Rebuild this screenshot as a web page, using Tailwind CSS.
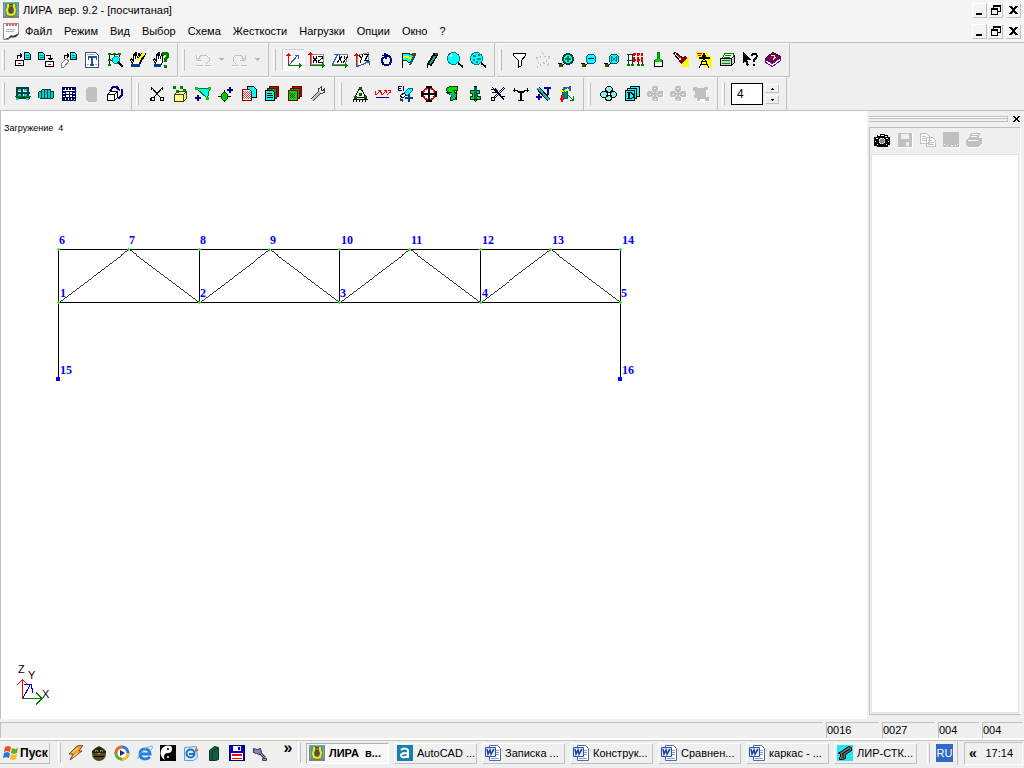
<!DOCTYPE html>
<html lang="ru">
<head>
    <meta charset="UTF-8">
    <meta name="viewport" content="width=device-width, initial-scale=1.0">
    <title>ЛИРА вер. 9.2 - [посчитаная]</title>
    <script src="https://cdn.jsdelivr.net/npm/@tailwindcss/browser@4"></script>
</head>
<body class="flex h-screen flex-col overflow-hidden bg-[#efefef] font-['Liberation_Sans',Arial,sans-serif] text-[11px] text-black">

    <!-- shared icons -->
    <svg class="hidden" xmlns="http://www.w3.org/2000/svg">
        <symbol id="lyre" viewBox="0 0 16 16">
            <path fill="#808080" d="M0 0h16v16H0z"/>
            <path fill="none" stroke="#40c8c8" d="M1 .5h14M1.5 1v13M14.500 1v13"/>
            <path fill="#505050" stroke="#e8f000" stroke-width="2" d="M5 2v3l-1 3 1 4 3 1 3-1 1-4-1-3V2"/>
            <path fill="#808000" d="M6 3h4v2H6zM5 14h6v1H5z"/>
        </symbol>
        <symbol id="minimize" viewBox="0 0 13 13"><path fill="#000" d="M3 9h6v2H3z"/></symbol>
        <symbol id="restore" viewBox="0 0 13 13">
            <path fill="#000" d="M4 1h8v7H9V7h2V3H5v1H4zM2 4h7v7H2zM3 6v4h5V6z" fill-rule="evenodd"/>
        </symbol>
        <symbol id="close" viewBox="0 0 13 13">
            <path fill="#000" d="M2 2h3v1h1v1h1V3h1V2h3v1h-1v1H9v1H8v2h1v1h1v1h1v1H8V9H7V8H6v1H5v1H2V9h1V8h1V7h1V5H4V4H3V3H2z"/>
        </symbol>
        <symbol id="word" viewBox="0 0 16 16">
            <path fill="#fff" stroke="#4a6aa8" d="M4.500.5h8l3 3v12h-11z"/>
            <path stroke="#7f9fd8" d="M11 5.500h3M11 7.500h3M11 9.500h3M6 13.500h8"/>
            <path fill="#e4ecfa" stroke="#2a52a8" d="M.5 2.500h10v9H.5z"/>
            <path fill="none" stroke="#1c4098" stroke-width="1.500" d="M2 4l1 5 2-4 1 4 3-5"/>
        </symbol>
        <symbol id="sheets" viewBox="0 0 18 18">
            <path fill="#c00000" stroke="#700000" d="M6.500 1.500h9v10h-9z"/>
            <path fill="#00a000" stroke="#700000" d="M4.500 3.500h9v10h-9z"/>
        </symbol>
        <symbol id="cross" viewBox="0 0 18 18">
            <path fill="#fff" stroke="none" d="M8 2h5v5h5v6h-5v4H7v-4H2V8h6z"/>
            <path fill="#c0c0c0" stroke="none" d="M7 1h4l1 1v4h4l1 1v4l-1 1h-4v3l-1 1H7l-1-1v-3H2l-1-1V7l1-1h4V2z"/>
            <path fill="none" stroke="#efefef" d="M6 6l2 2M12 6l-2 2M6 12l2-2M12 12l-2-2M8 3.500h2M8 14.500h2M3 9.500h2M13 9.500h2"/>
        </symbol>
    </svg>

    <header class="bg-[#f4f4f4]">
        <div class="flex h-[21px] items-center px-[3px] pb-px">
            <svg class="mr-1 size-[16px]"><use href="#lyre"/></svg>
            <h1 class="whitespace-pre">ЛИРА  вер. 9.2 - [посчитаная]</h1>
            <div class="ml-auto flex [shape-rendering:crispEdges] [&>button]:flex [&>button]:size-[15px] [&>button]:items-center [&>button]:justify-center [&>button]:border [&>button]:border-t-white [&>button]:border-r-[#c0c0c0] [&>button]:border-b-[#c0c0c0] [&>button]:border-l-white [&_svg]:size-[13px]">
                <button aria-label="Свернуть"><svg><use href="#minimize"/></svg></button>
                <button aria-label="Восстановить" class="ml-px"><svg><use href="#restore"/></svg></button>
                <button aria-label="Закрыть" class="ml-[3px]"><svg><use href="#close"/></svg></button>
            </div>
        </div>
        <div class="flex h-[22px] items-center border-b border-[#c0c0c0] px-[3px] pb-px">
            <svg class="mr-[5px] h-[18px] w-[17px]" viewBox="0 0 17 18">
                <path fill="#fff" stroke="#909090" d="M.5 1.500h15v11l-4 3H8l-3 2H.5z"/>
                <path stroke="#ff5050" stroke-width="2" stroke-dasharray="2 1" d="M3 3h11"/>
                <path fill="none" stroke="#b0b0b0" d="M3 7.500h9M3 9.500h8"/>
                <path fill="#303030" d="M1 17l4-1 3-3 2 1 6-3-3 4H8l-3 2z"/>
            </svg>
            <nav class="flex gap-3">
                <a href="#">Файл</a>
                <a href="#">Режим</a>
                <a href="#">Вид</a>
                <a href="#">Выбор</a>
                <a href="#">Схема</a>
                <a href="#">Жесткости</a>
                <a href="#">Нагрузки</a>
                <a href="#">Опции</a>
                <a href="#">Окно</a>
                <a href="#">?</a>
            </nav>
            <div class="ml-auto flex [shape-rendering:crispEdges] [&>button]:flex [&>button]:size-[15px] [&>button]:items-center [&>button]:justify-center [&>button]:border [&>button]:border-t-white [&>button]:border-r-[#c0c0c0] [&>button]:border-b-[#c0c0c0] [&>button]:border-l-white [&_svg]:size-[13px]">
                <button aria-label="Свернуть окно"><svg><use href="#minimize"/></svg></button>
                <button aria-label="Восстановить окно" class="ml-px"><svg><use href="#restore"/></svg></button>
                <button aria-label="Закрыть окно" class="ml-[3px]"><svg><use href="#close"/></svg></button>
            </div>
        </div>
    </header>

    <!-- toolbars -->
    <div class="border-b border-[#c0c0c0] [shape-rendering:crispEdges] [&_button]:flex [&_button]:shrink-0 [&_button]:items-center [&_button]:justify-center [&_i]:mr-[6px] [&_i]:h-[22px] [&_i]:w-[3px] [&_i]:border-r [&_i]:border-l [&_i]:border-r-[#c0c0c0] [&_i]:border-l-white [&_svg]:size-[18px] [&_svg]:fill-none [&_svg]:stroke-black">
        <div class="flex gap-[2px] [&>div]:flex [&>div]:h-[34px] [&>div]:items-center [&>div]:border-t [&>div]:border-r [&>div]:border-b [&>div]:border-t-white [&>div]:border-r-[#c0c0c0] [&>div]:border-b-[#c0c0c0] [&>div]:pr-[5px] [&>div]:pl-[2px] [&>div>button]:h-[22px] [&>div>button]:w-[23px]">
            <div>
                <i></i>
                <button aria-label="Открыть"><svg viewBox="0 0 18 18"><path fill="#fff" d="M1.500 9.500h8v5h-8z"/><path stroke="#f00" d="M4 12.500h3"/><path d="M3.500 8V4.500H8M6.500 2v5M7.500 3v3"/><path fill="#0ff" stroke="#000" d="M10.500 1.500h4l2 2v5h-6z"/><path stroke="#008080" d="M12 4.500h3M12 6.500h4"/></svg></button>
                <button aria-label="Сохранить"><svg viewBox="0 0 18 18"><path fill="#fff" d="M8.500 10.500h8v5h-8z"/><path stroke="#f00" d="M11 13.500h3"/><path d="M9 4.500h4.500V9M11 7.500h5M12 8.500h3"/><path fill="#0ff" stroke="#000" d="M1.500 1.500h4l2 2v5h-6z"/><path stroke="#008080" d="M3 4.500h3M3 6.500h4"/></svg></button>
                <button aria-label="Импорт"><svg viewBox="0 0 18 18"><path d="M4.500 8V4.500H9M7.500 2v5M8.500 3v3"/><path fill="#0ff" stroke="#000" d="M10.500 1.500h4l2 2v5h-6z"/><path stroke="#008080" d="M12 4.500h3M12 6.500h4"/><path fill="#fff" stroke="#808080" d="M6 8l3 2-5 6H1v-3z"/></svg></button>
                <button aria-label="Текст"><svg viewBox="0 0 18 18"><path fill="#fff" stroke="#405070" d="M2.500 1.500h10l3 3v12h-13z"/><path stroke="#a0b0c0" d="M4 3.500h8M4 13.500h2M12 13.500h2"/><path stroke="#2050a0" stroke-width="2" d="M5 6h9M9 6v7M7 14h4"/><path stroke="#2050a0" d="M5.500 6v3M13.500 6v3"/></svg></button>
                <button aria-label="Найти"><svg viewBox="0 0 18 18"><path d="M2 3.500h12M2 9.500h8M3.500 3v11M8.500 3v5M13.500 3v3"/><path stroke="#008000" stroke-width="2" d="M2 3h3M7 3h3M12 3h3M2 9h3M2 14h3"/><circle cx="10" cy="9" r="3.500" fill="#0ff" stroke="#008080"/><path stroke-width="2" d="M12 11l5 5"/></svg></button>
                <button aria-label="Править"><svg viewBox="0 0 18 18"><path fill="#fff" d="M4.500 14l-3-5 1-1 2 2V3.500l1-1 1 5V2l1-.5 1 6 1-5h1v5l2-2 1 1-3 5v3z"/><path stroke="#ff0" stroke-width="3" d="M9 9l6-7"/><path d="M17 2l-6 11M13 2l-4 5"/><path fill="#004080" stroke="#004080" d="M2.500 13.500h8v2h-8z"/></svg></button>
                <button aria-label="Вопрос"><svg viewBox="0 0 18 18"><path fill="#fff" d="M4.500 14l-3-5 1-1 2 2V3.500l1-1 1 5V2l1-.5 1 6 1-5h1v9l-2 3z"/><path stroke="#008000" stroke-width="3" d="M10 4l2-2h3l1 2-1 3-2 1v3M12 15h3"/><path fill="#004080" stroke="#004080" d="M2.500 13.500h6v2h-6z"/></svg></button>
            </div>
            <div>
                <i></i>
                <button aria-label="Отменить" disabled><svg viewBox="0 0 18 18"><path stroke="#fff" d="M4 6l4-2h5l3 4-2 5M2 15.500h16M3 3v7h6"/><path stroke="#c0c0c0" d="M4 8.500L7 4h5l3 3v3l-3 3M2.500 4v5M3 9.500h5M2 7.500h4M2 14.500h7M11 14.500h6"/></svg></button>
                <button aria-label="Список отмен" disabled class="!w-[13px]"><svg class="!h-[4px] !w-[7px]" viewBox="0 0 7 4"><path fill="#b8b8b8" stroke="none" d="M1 0h6L4 3z"/></svg></button>
                <button aria-label="Вернуть" disabled><svg viewBox="0 0 18 18"><path stroke="#fff" d="M14 6l-4-2H6L3 8l2 5M2 15.500h16"/><path stroke="#c0c0c0" d="M14 8.500L11 4H6L3 7v3l3 3M15.500 4v5M10 9.500h5M12 7.500h4M2 14.500h7M11 14.500h6"/></svg></button>
                <button aria-label="Список возвратов" disabled class="!w-[13px]"><svg class="!h-[4px] !w-[7px]" viewBox="0 0 7 4"><path fill="#b8b8b8" stroke="none" d="M1 0h6L4 3z"/></svg></button>
            </div>
            <div>
                <i></i>
                <button aria-label="Изометрия" class="border border-t-[#d0d0d0] border-r-white border-b-white border-l-[#d0d0d0] bg-[#f8f8f8]"><svg viewBox="0 0 18 18"><path stroke="#f00" d="M3.500 14V2M1 4.500h5M2 3.500h3"/><path stroke="#2060c0" d="M4 14l9-10M10 4.500h4M13.500 4v4"/><path stroke="#008000" d="M3 14.500h14M14.500 12v5M15.500 13v3"/></svg></button>
                <button aria-label="XZ"><svg viewBox="0 0 18 18"><path fill="#fff" stroke="#909090" d="M3.500 3.500h12v10h-12z"/><path stroke="#f00" d="M2.500 14V1M0 3.500h5M1 2.500h3"/><path stroke="#008000" d="M2 14.500h15M14.500 12v5M15.500 13v3"/><path d="M5.500 5v2l3 3v2M8.500 5v2l-3 3v2M10 5.500h4v2L10.500 10v1.500h4"/></svg></button>
                <button aria-label="XY"><svg viewBox="0 0 18 18"><path fill="#fff" stroke="#808080" d="M6.500 3.500h10l-2 10h-13z"/><path stroke="#2060c0" d="M1 14l6-11M3 3.500h5v3"/><path stroke="#008000" d="M1 14.500h16M14.500 12v5M15.500 13v3"/><path d="M8 5v2l2 3v2M11 5l-5 7M13 5l1 3M17 5l-5 7"/></svg></button>
                <button aria-label="YZ"><svg viewBox="0 0 18 18"><path fill="#fff" stroke="#909090" d="M3.500 4.500l11-3v9l-11 5z"/><path stroke="#f00" d="M2.500 16V2M0 4.500h5M1 3.500h3"/><path stroke="#2060c0" d="M2 16l13-5M12 10h3v4"/><path d="M5 4l2 3M9 3l-3 9M10 3.500h4l-3 6h4"/></svg></button>
                <button aria-label="Повернуть"><svg viewBox="0 0 18 18"><path fill="#000080" stroke="none" d="M7 2h2v1h2v1h2v1h1v2h1v5h-1v2h-2v1H7v-1H5v-2H4V7h1V6h2v2H6v3h1v2h5v-2h1V7h-1V6h-2v2H8V7H7V5H5V4h2z"/></svg></button>
                <button aria-label="Флаги рисования"><svg viewBox="0 0 18 18"><path fill="#0ff" stroke="#004000" d="M2.500 2.500h6l2 1h5l-4 8H9l-3-2H2.500z"/><path stroke="#ff0" stroke-width="2" d="M3 6h5l3 2"/><path d="M2.500 2v15"/><path stroke="#006060" stroke-width="2" d="M15 3l-5 11"/><path fill="#604000" stroke="#604000" d="M12.500 2.500h3v2h-3z"/></svg></button>
                <button aria-label="Карандаш"><svg viewBox="0 0 18 18"><path stroke-width="5" d="M13 3L6 14"/><path stroke="#00a0a0" stroke-width="2" d="M12 5l-5 8"/><path stroke="#604000" stroke-width="2" d="M12 3h3"/><path d="M4.500 13v4"/></svg></button>
                <button aria-label="Лупа"><svg viewBox="0 0 18 18"><circle cx="7.500" cy="7.500" r="6" fill="#0ff" stroke="#008080"/><path stroke="#fff" stroke-width="2" d="M4 6l2-2"/><path stroke-width="2" d="M12 12l5 4"/></svg></button>
                <button aria-label="Показать все"><svg viewBox="0 0 18 18"><circle cx="7.500" cy="7.500" r="6" fill="#0ff" stroke="#008080"/><path stroke="#008080" stroke-width="2" d="M4 5h3M8 8h4M4 9h2M9 4h2M7 11h2"/><path stroke-width="2" d="M12 12l5 4"/></svg></button>
            </div>
            <div>
                <i></i>
                <button aria-label="Фильтр"><svg viewBox="0 0 18 18"><path fill="#fff" d="M2.500 2.500h12v2l-4 5v5l-3 2v-7l-5-5z"/></svg></button>
                <button aria-label="Полифильтр" disabled><svg viewBox="0 0 18 18"><path stroke="#c0c0c0" stroke-dasharray="2 2" d="M8.500 2l2 4 6-1-4 5 3 5-6-3-6 4 1-6-3-4h5z"/></svg></button>
                <button aria-label="Увеличить"><svg viewBox="0 0 18 18"><circle cx="11" cy="8" r="5" fill="#0ff" stroke="#004040" stroke-width="2"/><path stroke="#008000" stroke-width="2" d="M8 8h6M11 5v6"/><path stroke="#604000" stroke-width="3" d="M2 14.500h4"/><path d="M1 12.500h4M5 15l3-3"/></svg></button>
                <button aria-label="Уменьшить"><svg viewBox="0 0 18 18"><circle cx="11" cy="8" r="5" fill="#0ff" stroke="#006080"/><path stroke="#0000a0" d="M8 7.500h6"/><path stroke="#604000" stroke-width="3" d="M2 14.500h4"/><path d="M1 12.500h4M5 15l3-3"/></svg></button>
                <button aria-label="Исходный размер"><svg viewBox="0 0 18 18"><circle cx="11" cy="8" r="5" fill="#0ff" stroke="#006060"/><path stroke="#006080" d="M8 5l6 6M14 5l-6 6M8.500 5v6M13.500 5v6"/><path stroke="#604000" stroke-width="3" d="M2 14.500h4"/><path d="M1 12.500h4M5 15l3-3"/></svg></button>
                <button aria-label="Узлы"><svg viewBox="0 0 18 18"><path stroke="#004040" d="M1 3.500h8M1 9.500h8M2.500 3v12M6.500 3v12"/><path stroke="#e00000" stroke-width="2" stroke-dasharray="3 1" d="M7 3h10M7 9h10M8 2v9M12 2v9M16 2v9"/><path d="M12.500 11v4M16.500 11v4"/><path stroke="#008000" stroke-width="2" d="M1 14h3M5 14h3M11 14h3M15 14h3"/></svg></button>
                <button aria-label="Кисть"><svg viewBox="0 0 18 18"><path fill="#0c0" stroke="#008000" d="M8.500 1.500h2v7h-2z"/><path fill="#fff" d="M5.500 9.500h8v6h-8z"/><path fill="#0c0" stroke="none" d="M6 8h7v3H6z"/></svg></button>
                <button aria-label="Фонарь"><svg viewBox="0 0 18 18"><path fill="#ff0" stroke="none" d="M11 11l6-6v11H9z"/><path fill="#fff" d="M1.500 2.500l2-1 8 6-2 4z"/><path stroke="#800000" stroke-width="3" d="M8 12l6-6"/><path stroke="#f00" d="M4 3l6 5"/></svg></button>
                <button aria-label="Отметки"><svg viewBox="0 0 18 18"><path fill="#ff0" stroke="none" d="M1 1h9l7 5v10H9L5 7H1z"/><path d="M8.500 2v6M9.500 2v6M9 7l-5 10M9 7l5 10M6 10.500h6M5 13.500h8"/><path stroke-width="2" d="M4 7h11M7 5h4"/><path stroke="#c00000" d="M2 2.500h5M3 4.500h3"/></svg></button>
                <button aria-label="Печать"><svg viewBox="0 0 18 18"><path fill="#fff" stroke="#008000" d="M6.500 2.500h9v5h-11z"/><path stroke="#008000" d="M7 4.500h6M6 6.500h6"/><path fill="#c0d8c8" d="M2.500 7.500h11v7h-11zM13.500 7.500l3-3v7l-3 3"/><path stroke="#008000" d="M4 9.500h8M4 12.500h8"/></svg></button>
                <button aria-label="Что это?"><svg viewBox="0 0 18 18"><path fill="#000" stroke="none" d="M2 1l8 8H6l2 5-2 1-2-5-2 2z"/><path stroke-width="2" d="M10 5l2-2h3l1 2-1 2-2 2v2M12 14h2"/></svg></button>
                <button aria-label="Справка"><svg viewBox="0 0 18 18"><path fill="#800080" stroke="#400040" d="M8.500 1.500l8 4-8 6-7-4z"/><path fill="#fff" stroke="#800080" d="M1.500 8.500l7 4 8-6v3l-8 6-7-4z"/><path stroke="#ff0" d="M7 4.500h3l1 2-2 2"/></svg></button>
            </div>
        </div>
        <div class="flex gap-[2px] [&>div]:flex [&>div]:h-[33px] [&>div]:items-center [&>div]:border-t [&>div]:border-r [&>div]:border-t-white [&>div]:border-r-[#c0c0c0] [&>div]:pr-[5px] [&>div]:pl-[2px] [&>div>button]:h-[22px] [&>div>button]:w-[23px]">
            <div>
                <i></i>
                <button aria-label="Рама"><svg viewBox="0 0 18 18"><path stroke="#004040" stroke-width="2" d="M2 3h12v9M3 3v10h13M8 3v9M2 8h14"/><path stroke="#0cc" stroke-width="2" d="M4 5h3M10 5h3M4 10h3M10 10h3M2 14h3M12 14h3"/><path stroke="#008000" d="M1 11.500h16"/></svg></button>
                <button aria-label="Ферма"><svg viewBox="0 0 18 18"><path fill="#0cc" stroke="none" d="M2 7l3-2 4-1 4 1 4 2v6H2z"/><path stroke="#004040" d="M2 6.500h3M5 4.500h9M14 6.500h3M4.500 5v9M7.500 4v10M10.500 4v10M13.500 5v9M1.500 7v6M16.500 7v6M3 13.500h13"/></svg></button>
                <button aria-label="Пластины"><svg viewBox="0 0 18 18"><path fill="#fff" stroke="#000040" d="M2.500 2.500h13v13h-13z"/><path stroke="#000080" stroke-width="2" stroke-dasharray="2 1" d="M3 4h12M3 14h12M4 3v12M14 3v12"/><path stroke="#000040" d="M5.500 6.500h7v6h-7zM9 6.500v6M5.500 9.500h7"/></svg></button>
                <button aria-label="Оболочка" disabled><svg viewBox="0 0 18 18"><path fill="#c0c0c0" stroke="none" d="M5 2h7l2 2v11l-2 2H5l-2-2V4z"/></svg></button>
                <button aria-label="Объемное тело"><svg viewBox="0 0 18 18"><path fill="#fff" d="M1.500 9.500l3-3h7v6l-3 3h-7zM2 9.500h6.500v6M8.500 9.500l3-3"/><path stroke="#000080" stroke-width="2" d="M4 6l3-4h4l2 2M16 4v6l-4 4M9 2l5 3"/></svg></button>
            </div>
            <div>
                <i></i>
                <button aria-label="Упаковка"><svg viewBox="0 0 18 18"><path d="M3 2l9 10M15 2L6 12M3.500 3v2M14.500 3v2"/><path d="M3 12.500h3v3H3zM12 12.500h3v3h-3zM2.500 13v3M15.500 13v3"/></svg></button>
                <button aria-label="Добавить узел"><svg viewBox="0 0 18 18"><path fill="#ff8" stroke="#404000" d="M3.500 9.500h9v7h-9zM12.500 9.500l3-3v7l-3 3M3.500 9.500l3-3h9"/><path stroke="#008000" stroke-width="3" d="M2 2.500h3M9 2.500h3M5 6.500h3M12 5.500h3"/></svg></button>
                <button aria-label="Добавить элемент"><svg viewBox="0 0 18 18"><path fill="#0ff" stroke="#008000" d="M2.500 3.500h13l-2 10z"/><path stroke="#0c0" stroke-width="3" d="M1 3.500h3M14 3.500h3M12 13.500h3"/><path stroke="#000080" stroke-width="2" d="M1 13h6M4 10v6"/></svg></button>
                <button aria-label="Новый узел"><svg viewBox="0 0 18 18"><path d="M1 11.500h13M7.500 5v12"/><path fill="#0c0" stroke="#006000" d="M6.500 7.500h2l2 2v4l-2 2h-2l-2-2v-4z"/><path stroke="#000080" stroke-width="2" d="M10 5h6M13 2v6"/></svg></button>
                <button aria-label="Копировать"><svg viewBox="0 0 18 18"><path fill="#0ff" d="M7.500 1.500h6l3 3v8h-9z"/><path fill="#fff" stroke="#800000" d="M2.500 4.500h7l2 2v9h-9z"/><path stroke="#e04040" stroke-dasharray="1 1" d="M3 6.500h7M4 7.500h7M3 8.500h8M4 9.500h7M3 10.500h8M4 11.500h7M3 12.500h8M4 13.500h7"/></svg></button>
                <button aria-label="Листы"><svg viewBox="0 0 18 18"><use href="#sheets"/><path fill="#0ff" d="M2.500 5.500h7l2 2v8h-9z"/><path d="M4 8.500h5M4 10.500h6M4 12.500h6"/></svg></button>
                <button aria-label="Сборка"><svg viewBox="0 0 18 18"><use href="#sheets"/><path fill="#0d0" stroke="#800000" d="M2.500 5.500h9v10h-9z"/><path stroke="#004000" stroke-dasharray="1 1" d="M4 8.500h6M5 9.500h4M4 10.500h6M5 11.500h4M4 12.500h6"/></svg></button>
                <button aria-label="Ключ"><svg viewBox="0 0 18 18"><path stroke="#404040" stroke-width="4" d="M3 15l8-8"/><path stroke="#c0c0c0" stroke-width="2" d="M3 15l8-8"/><path stroke="#404040" d="M9.500 7V4l3-2v3h2l1-1v3l-3 2"/></svg></button>
            </div>
            <div>
                <i></i>
                <button aria-label="Связи"><svg viewBox="0 0 18 18"><path d="M8 4L4 12M10 4l5 8M5 12.500h9"/><path stroke="#006000" stroke-width="3" d="M8 3.500h3M3 12.500h3M13 12.500h3M8 9.500h3"/><path d="M2 14.500h15"/><path stroke-width="2" stroke-dasharray="1 2" d="M2 16h15"/></svg></button>
                <button aria-label="Нагрузка"><svg viewBox="0 0 18 18"><path stroke="#f00" d="M1.500 10V6M2 10l4-4M4 5.500h2.500V8M7.500 10V7M8 10l4-4M10 5.500h2.500V8M13 10l4-4M14 5.500h2.500V8"/><path stroke="#000080" d="M2 12.500h13"/></svg></button>
                <button aria-label="Жесткости элементов"><svg viewBox="0 0 18 18"><path stroke="#000080" d="M1.500 1v5M1 1.500h4M1 3.500h3M1 5.500h4M6.500 1v5"/><path fill="#0ff" stroke="#006080" d="M7 8l5-5h3v3l-5 5z"/><path fill="#fff" d="M3 11l4-3 2 2-3 3z"/><path stroke="#004080" stroke-width="2" d="M8 13h8M12 9v8M3 14l3 2"/></svg></button>
                <button aria-label="Жесткие вставки"><svg viewBox="0 0 18 18"><circle cx="9" cy="9" r="6" fill="#fff" stroke="#e00000" stroke-width="2"/><path stroke-width="2" d="M1 9h16M9 2v14M2 6v6M16 6v6M6 2h6M6 16h6"/></svg></button>
                <button aria-label="Шарниры"><svg viewBox="0 0 18 18"><path fill="#0d0" stroke="#004000" d="M3.500 3.500l3-2h8v4h-4l3 4-1 5-5 1v-3l2-2-5-2z"/><path stroke="#0aa" stroke-width="2" d="M6 8l5 3-3 3"/><path d="M3 7.500h6M13.500 6v9"/></svg></button>
                <button aria-label="Местные оси"><svg viewBox="0 0 18 18"><path fill="#0d0" stroke="#004000" d="M4.500 5.500h9v3h-2v3h3v3h-3l-2 2-2-2h-3v-3h2v-3h-2z"/><path stroke="#006080" stroke-width="3" d="M9 1v13"/><path d="M8 1.500h3M7 14.500h5"/></svg></button>
                <button aria-label="Удалить"><svg viewBox="0 0 18 18"><path stroke="#000080" d="M2 4.500h5M6 3l9 12"/><path d="M15 2L4 13M16 3L5 14M3 2l9 10M2 12.500h3v3H2zM12 11.500h4M3 7.500h4"/></svg></button>
                <button aria-label="Тройник"><svg viewBox="0 0 18 18"><path d="M1 5.500h4l2 2h4l2-2h4M8.500 8v7M9.500 8v7M6 15.500h6M2.500 3v4M15.500 3v4M7 6.500h4"/></svg></button>
                <button aria-label="Температура"><svg viewBox="0 0 18 18"><path stroke-width="4" d="M3 3l11 12"/><path stroke="#0cc" stroke-width="2" d="M3 3l11 12"/><path stroke="#0000a0" stroke-width="2" d="M9 3h7M13 3v7M1 12h6M4 9v6"/></svg></button>
                <button aria-label="Перемещения"><svg viewBox="0 0 18 18"><path fill="#008080" stroke="#006060" d="M4.500 4.500h5v9h-5z"/><path stroke="#2060c0" stroke-width="2" d="M5 3h7M12 1v5"/><path stroke="#ff0" stroke-width="2" d="M2 6h5l3-2"/><path stroke="#008000" d="M5 5l10 10M15.500 11v4H12"/><path stroke="#f00" stroke-width="2" d="M4 10v7M2 14h4"/></svg></button>
            </div>
            <div>
                <i></i>
                <button aria-label="Сечения"><svg viewBox="0 0 18 18"><path fill="#8ee" d="M7.500 1.500h3l2 2v3h2l2 2v2l-2 2h-3v2l-2 1h-2l-2-1v-2h-3l-2-2v-2l2-2h3v-3z"/><path stroke-width="2" d="M6 6l6 6M12 6l-6 6"/><path fill="#fff" stroke="none" d="M8 8h2v2H8z"/></svg></button>
                <button aria-label="Документы"><svg viewBox="0 0 18 18"><path fill="#0ff" d="M7.500 1.500h9v10h-9z"/><path fill="#0ff" d="M4.500 3.500h9v10h-9z"/><path fill="#0ff" d="M2.500 5.500h9v10h-9z"/><path d="M4 7.500h4l2 2v3l-2 1H4M5.500 7v6M6.500 7v6"/></svg></button>
                <button aria-label="Сечение 1" disabled><svg><use href="#cross"/></svg></button>
                <button aria-label="Сечение 2" disabled><svg><use href="#cross"/></svg></button>
                <button aria-label="Сечение 3" disabled><svg viewBox="0 0 18 18"><path fill="#fff" stroke="none" d="M3 3h14v3h-2v8h3v3H4v-4H3z"/><path fill="#c0c0c0" stroke="none" d="M1 2h4v1h7V2h4v3h-2v7h3v4h-4v-2H8v2H5v-3H2v-3h1V6H1z"/></svg></button>
            </div>
            <div class="!pr-[7px]">
                <i></i>
                <input aria-label="Номер загружения" type="text" value="4" class="h-[22px] w-[32px] border border-black bg-white pl-[5px] text-[12px]">
                <div class="ml-[2px] flex flex-col gap-[2px] [&>button]:h-[9px] [&>button]:w-[14px] [&>button]:border [&>button]:border-t-white [&>button]:border-r-[#c0c0c0] [&>button]:border-b-[#c0c0c0] [&>button]:border-l-white [&_svg]:!h-[2px] [&_svg]:!w-[3px]">
                    <button aria-label="Больше"><svg viewBox="0 0 3 2"><path fill="#000" stroke="none" d="M1 0h1v1h1v1H0V1h1z"/></svg></button>
                    <button aria-label="Меньше"><svg viewBox="0 0 3 2"><path fill="#000" stroke="none" d="M0 0h3v1H2v1H1V1H0z"/></svg></button>
                </div>
            </div>
        </div>
    </div>

    <div class="flex min-h-0 flex-1">
        <!-- design scheme, drawn from the top left corner of the view -->
        <main class="relative min-w-0 flex-1 overflow-hidden border-l border-[#c0c0c0] bg-white">
            <p class="pt-[11px] pl-[3px] text-[9px] leading-[12px] whitespace-pre">Загружение  4</p>
            <svg class="absolute top-0 left-0 h-[300px] w-[700px]" viewBox="1 111 700 300">
                <g fill="none" stroke="#000" shape-rendering="crispEdges">
                    <path d="M58 249.500H621M58 302.500H621"/>
                    <path d="M58.500 249V379M199.500 249V302M339.500 249V302M480.500 249V302M620.500 249V379"/>
                    <path stroke-width=".8" d="M58.500 302.500L128.500 249.500L199.500 302.500L269.500 249.500L339.500 302.500L409.500 249.500L480.500 302.500L550.500 249.500L620.500 302.500"/>
                </g>
                <g stroke="#00ff00" shape-rendering="crispEdges">
                    <path d="M57 249.500h3M127 249.500h3M198 249.500h3M268 249.500h3M338 249.500h3M408 249.500h3M479 249.500h3M549 249.500h3M619 249.500h3"/>
                    <path d="M58.500 248v3M128.500 248v3M199.500 248v3M269.500 248v3M339.500 248v3M409.500 248v3M480.500 248v3M550.500 248v3M620.500 248v3"/>
                    <path d="M57 302.500h3M198 302.500h3M338 302.500h3M479 302.500h3M619 302.500h3"/>
                    <path d="M58.500 301v3M199.500 301v3M339.500 301v3M480.500 301v3M620.500 301v3"/>
                </g>
                <path fill="#00f" d="M56 377h4v4h-4zM618 377h4v4h-4z"/>
                <g class="fill-[#0000ff] font-['Liberation_Serif',serif] text-[12px] font-bold">
                    <text x="59" y="244">6</text>
                    <text x="129" y="244">7</text>
                    <text x="200" y="244">8</text>
                    <text x="270" y="244">9</text>
                    <text x="341" y="244">10</text>
                    <text x="411" y="244">11</text>
                    <text x="482" y="244">12</text>
                    <text x="552" y="244">13</text>
                    <text x="622" y="244">14</text>
                    <text x="60" y="297">1</text>
                    <text x="200" y="297">2</text>
                    <text x="340" y="297">3</text>
                    <text x="482" y="297">4</text>
                    <text x="621" y="297">5</text>
                    <text x="60" y="374">15</text>
                    <text x="622" y="374">16</text>
                </g>
            </svg>
            <svg class="absolute bottom-[11px] left-[14px] h-[44px] w-[40px]" viewBox="0 0 40 44" fill="none">
                <g shape-rendering="crispEdges">
                    <path stroke="#f00" d="M7.500 35V15M1.500 21.500l6-6l6 6"/>
                    <path stroke="#00f" d="M8 34l7-13M9 20.500h7l2 8"/>
                    <path stroke="#008000" d="M8 34.500h19M21 28.500l6 6l-6 6"/>
                </g>
                <g class="fill-black text-[11px]">
                    <text x="3" y="9">Z</text>
                    <text x="13" y="15">Y</text>
                    <text x="27" y="34">X</text>
                </g>
            </svg>
        </main>

        <aside class="flex w-[158px] shrink-0 flex-col border-l border-white pr-[3px] pb-[4px] pl-[2px] [shape-rendering:crispEdges]">
            <div class="flex h-[16px] items-center">
                <div class="h-[6px] flex-1 border-t border-r border-b border-[#c0c0c0]"><div class="h-[2px] border-b border-[#c0c0c0] bg-white"></div></div>
                <button aria-label="Закрыть панель" class="ml-[3px]"><svg class="size-[10px]" viewBox="0 0 10 10"><path d="M2 2h2v1h1v1h1V3h1V2h2v1H8v1H7v2h1v1h1v1H7V7H6V6H5v1H4v1H2V7h1V6h1V4H3V3H2z"/></svg></button>
            </div>
            <div class="flex min-h-0 flex-1 flex-col border border-t-[#c0c0c0] border-r-white border-b-[#c0c0c0] border-l-[#c0c0c0] pb-px">
                <div class="flex h-[26px] shrink-0 items-center pb-[3px] [&_svg]:size-[18px] [&>button]:flex [&>button]:w-[23px] [&>button]:justify-center">
                    <button aria-label="Снимок"><svg viewBox="0 0 18 18"><path d="M1 6h3V4h3V3h5v1h3v2h2v8h-2v2H4v-1H1z"/><path fill="#fff" d="M5 4h2v1H5zM8 4h3v1H8zM12 5h2v1h-2zM3 7h2v1H3zM13 7h2v1h-2zM2 10h1v1H2zM15 10h1v1h-1zM4 13h1v1H4zM13 13h1v1h-1z"/><circle cx="9" cy="10" r="3" fill="#888" stroke="#fff" stroke-dasharray="2 1"/></svg></button>
                    <button aria-label="Сохранить снимок" disabled><svg viewBox="0 0 18 18"><path fill="#fff" d="M3 3h14v14H3z"/><path fill="#c0c0c0" d="M2 2h14v14H2z"/><path fill="#efefef" d="M5 3h8v5H5zM10 11h3v4h-3z"/></svg></button>
                    <button aria-label="Копировать снимок" disabled><svg viewBox="0 0 18 18"><path fill="#fff" stroke="#c0c0c0" d="M1.500 2.500h6l3 3v7h-9zM7.500 6.500h6l3 3v6h-9z"/><path stroke="#c0c0c0" d="M3 5.500h4M3 7.500h4M3 9.500h4M9 9.500h4M9 11.500h6M9 13.500h6"/></svg></button>
                    <button aria-label="Изображение" disabled><svg viewBox="0 0 18 18"><path fill="#c0c0c0" d="M1 1h16v15H1z"/><path fill="#fff" d="M2 13h1v1H2zM5 14h1v1H5zM9 14h2v1H9zM13 14h1v1h-1zM15 13h1v1h-1zM1 16h17v1H1z"/></svg></button>
                    <button aria-label="Печать снимка" disabled><svg viewBox="0 0 18 18"><path fill="#c0c0c0" d="M6 2h9l-1 5h3v5l-3 4H3l-2-3V9l3-2z"/><path fill="#fff" d="M7 3h6v1H7zM6 5h6v1H6zM3 9h10v1H3zM3 16h11l3-4v1l-3 4H3z"/></svg></button>
                </div>
                <div class="mx-px flex-1 border border-[#e4e4e4] bg-white"></div>
            </div>
        </aside>
    </div>

    <div class="flex h-[21px] shrink-0 gap-[3px] border-t-[3px] border-b-2 border-t-[#efefef] border-b-white pr-px leading-[15px] [&>div]:border-t [&>div]:border-l [&>div]:border-[#c0c0c0]">
        <div class="flex-1"></div>
        <div class="w-[53px]">0016</div>
        <div class="w-[53px]">0027</div>
        <div class="w-[41px]">004</div>
        <div class="w-[41px]">004</div>
    </div>

    <footer class="flex h-[28px] shrink-0 items-center border-t border-[#c8c4b8] pr-px pb-[3px] [&_svg]:size-[16px] [&_svg]:shrink-0">
        <button class="flex h-[21px] w-[50px] items-center gap-px border-r border-b border-[#c0c0c0] pl-[3px] text-[12px] font-bold">
            <svg viewBox="0 0 16 16"><path fill="#e85020" d="M2 2l3-1 3 1-1 5-3-1-3 1z"/><path fill="#60b020" d="M9 3l3 1 3-1-1 5-3 1-3-1z"/><path fill="#3070d8" d="M1 8l3-1 3 1-1 5-3-1-3 1z"/><path fill="#f8c020" d="M8 9l3 1 3-1-1 5-3 1-3-1z"/></svg>
            Пуск
        </button>
        <div class="ml-[8px] h-[20px] w-[3px] border-r border-l border-r-[#c0c0c0] border-l-white"></div>
        <div class="ml-[3px] flex [&>button]:flex [&>button]:w-[23px] [&>button]:justify-center">
            <button aria-label="Winamp"><svg viewBox="0 0 16 16"><path fill="#f8a020" stroke="#605040" d="M9 1l6-1-4 6h3L2 15l3-6H1z"/><path stroke="#ffe080" d="M10 3L4 8M10 8l-5 4"/></svg></button>
            <button aria-label="The Bat"><svg viewBox="0 0 16 16"><circle cx="8" cy="9" r="7" fill="#4c4a20"/><path fill="#202808" d="M1 6l7-5 7 5v2H1z"/><path fill="#a08040" d="M4 5h3v2H4zM9 5h3v2H9z"/><path d="M5 6h1v1H5zM10 6h1v1h-1zM3 11h10v1H3z"/><path fill="#c08020" d="M6 8h4l-2 2z"/></svg></button>
            <button aria-label="Media Player"><svg viewBox="0 0 16 16"><circle cx="8" cy="8" r="7.500" fill="#3078d8"/><path fill="#f06820" d="M8 .5A7.500 7.500 0 00.5 8H8z"/><path fill="#60b030" d="M.5 8A7.500 7.500 0 008 15.500V8z"/><path fill="#f8c020" d="M8 15.500A7.500 7.500 0 0015.500 8H8z"/><circle cx="8" cy="8" r="4.500" fill="#fff"/><path fill="#202870" d="M6 5l5 3-5 3z"/></svg></button>
            <button aria-label="Internet Explorer"><svg viewBox="0 0 16 16" fill="none"><path stroke="#2080d8" stroke-width="3" d="M4 9h9c0-3-2-5-5-5S3 6 3 9s2 5 5 5c2 0 4-1 5-2"/><path stroke="#60b8f0" d="M1 14c-1-4 8-13 14-13 1 1 0 3-1 4"/></svg></button>
            <button aria-label="Инь-Ян"><svg viewBox="0 0 16 16"><path d="M0 0h16v16H0z"/><circle cx="8" cy="8" r="7.500" fill="#fff"/><path d="M8 0a8 8 0 010 16 4 4 0 010-8 4 4 0 000-8z"/><circle cx="8" cy="4" r="1"/><circle cx="8" cy="12" r="1" fill="#fff"/></svg></button>
            <button aria-label="Outlook Express"><svg viewBox="0 0 16 16"><path fill="#d8ecff" stroke="#60a0e0" d="M1.500 2.500l12-1 1 11-4 3h-9z"/><circle cx="7.500" cy="8.500" r="4" fill="none" stroke="#2070c8" stroke-width="2"/><path stroke="#2070c8" stroke-width="2" d="M6 9h5"/><path fill="#e06020" d="M12 3l4 2-4 2z"/></svg></button>
            <button aria-label="Книга"><svg viewBox="0 0 16 16"><path fill="#106040" stroke="#003820" d="M3.500 5.500l5-4 4 1v12l-3 1h-6z"/><path fill="none" stroke="#003820" d="M6.500 15V6l5-3"/></svg></button>
            <button aria-label="Дискета"><svg viewBox="0 0 16 16" shape-rendering="crispEdges"><path fill="#0000d0" stroke="#000060" d="M.5.5h15v15H.5z"/><path fill="#fff" d="M4 1h8v5H4zM2 8h12v7H2z"/><path fill="#000080" d="M9 2h2v3H9z"/><path fill="#f00" d="M3 9h10v2H3zM3 13h10v1H3z"/></svg></button>
            <button aria-label="Сеть"><svg viewBox="0 0 16 16"><path fill="#8088b8" stroke="#303058" d="M1.500 3.500l4 1 3-1 1 4-2 2-3-1-3-1z"/><path stroke="#404058" stroke-width="3" d="M8 8l5 5"/><path stroke="#9098a8" d="M8 8l5 5"/><path fill="#a0a0a0" stroke="#404040" d="M10.500 13.500h4v2h-4z"/></svg></button>
        </div>
        <button class="ml-[11px] h-[24px] w-[12px] pb-[10px] text-[16px] leading-[14px] font-bold">»</button>
        <div class="ml-[4px] h-[20px] w-[3px] border-r border-l border-r-[#c0c0c0] border-l-white"></div>
        <div class="ml-[5px] flex min-w-0 flex-1 gap-[5px] [&>button]:flex [&>button]:h-[21px] [&>button]:w-[83px] [&>button]:items-center [&>button]:gap-[4px] [&>button]:border [&>button]:pl-[2px] [&>button]:whitespace-pre">
            <button class="border-t-[#b0b0b0] border-r-white border-b-white border-l-[#b0b0b0] bg-[#f8f8f8] font-bold"><svg><use href="#lyre"/></svg>ЛИРА  в...</button>
            <button class="border-t-white border-r-[#c0c0c0] border-b-[#c0c0c0] border-l-white"><svg viewBox="0 0 16 16"><path fill="#1880b0" d="M0 0h16v16H0z"/><path fill="none" stroke="#fff" stroke-width="2" d="M4 5c2-2 7-2 7 1v7M11 8c-4 0-7 0-7 2.500S10 13 11 10"/></svg>AutoCAD ...</button>
            <button class="border-t-white border-r-[#c0c0c0] border-b-[#c0c0c0] border-l-white"><svg><use href="#word"/></svg>Записка ...</button>
            <button class="border-t-white border-r-[#c0c0c0] border-b-[#c0c0c0] border-l-white"><svg><use href="#word"/></svg>Конструк...</button>
            <button class="border-t-white border-r-[#c0c0c0] border-b-[#c0c0c0] border-l-white"><svg><use href="#word"/></svg>Сравнен...</button>
            <button class="border-t-white border-r-[#c0c0c0] border-b-[#c0c0c0] border-l-white"><svg><use href="#word"/></svg>каркас - ...</button>
            <button class="border-t-white border-r-[#c0c0c0] border-b-[#c0c0c0] border-l-white"><svg viewBox="0 0 16 16"><path fill="#20e8f0" d="M0 0h16v16H0z"/><path fill="#707070" stroke="#000" d="M4.500 6.500l7-5 3 1v3l-6 4v4l-3 1h-3v-2l1-1V9l-2-1z"/><path stroke="#000" d="M5 9l8-5M6 13V9"/></svg>ЛИР-СТК...</button>
        </div>
        <div class="h-[20px] w-[3px] border-r border-l border-r-[#c0c0c0] border-l-white"></div>
        <button class="ml-[6px] h-[18px] w-[17px] bg-[#316ac5] text-white">RU</button>
        <div class="ml-[4px] h-[24px] w-px bg-[#c0c0c0]"></div>
        <div class="ml-[6px] flex h-[23px] w-[59px] items-center border border-t-[#c0c0c0] border-r-white border-b-white border-l-[#c0c0c0] pr-[9px] pl-[4px]">
            <button aria-label="Показать значки" class="text-[14px] leading-[16px] font-bold">«</button>
            <time class="ml-auto">17:14</time>
        </div>
    </footer>
</body>
</html>
